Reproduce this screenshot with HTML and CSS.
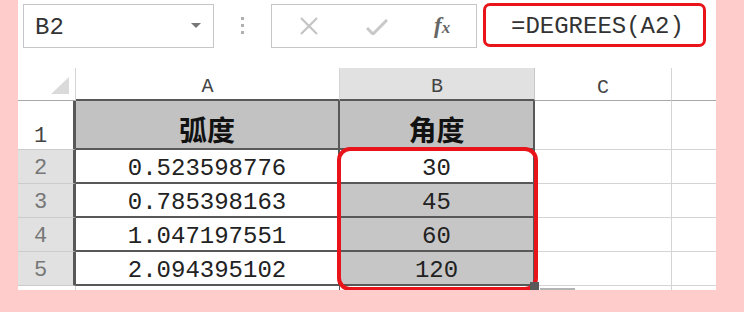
FILE: index.html
```html
<!DOCTYPE html>
<html lang="zh-CN">
<head>
<meta charset="UTF-8">
<title>DEGREES</title>
<link rel="stylesheet" href="styles.css">
</head>
<body>
<div class="panel">
  <div class="formula-bar">
    <div class="name-box">
      <span>B2</span>
      <span class="arrow"></span>
    </div>
    <div class="dots"><i></i><i></i><i></i></div>
    <div class="fx-box">
      <svg class="ico" width="20" height="18" viewBox="0 0 20 18"><path d="M2 1 L18 17 M18 1 L2 17" stroke="#c4c4c4" stroke-width="2.2" fill="none"/></svg>
      <svg class="ico" width="22" height="16" viewBox="0 0 22 16"><path d="M1 9 L7 15 L21 1" stroke="#c8c8c8" stroke-width="3" fill="none"/></svg>
      <span class="fx">f<small>x</small></span>
    </div>
    <div class="formula">=DEGREES(A2)</div>
  </div>

  <div class="sheet">
    <div class="grid">
      <div class="corner"><span class="tri"></span></div>
      <div class="colh hd-t">A</div>
      <div class="colh hd-t sel">B</div>
      <div class="colh">C</div>
      <div class="colh last"></div>

      <div class="rowh first">1</div>
      <div class="cell t title">弧度</div>
      <div class="cell t title">角度</div>
      <div class="cell"></div>
      <div class="cell last"></div>

      <div class="rowh sel">2</div>
      <div class="cell t">0.523598776</div>
      <div class="cell t">30</div>
      <div class="cell"></div>
      <div class="cell last"></div>

      <div class="rowh sel">3</div>
      <div class="cell t">0.785398163</div>
      <div class="cell t shade">45</div>
      <div class="cell"></div>
      <div class="cell last"></div>

      <div class="rowh sel">4</div>
      <div class="cell t">1.047197551</div>
      <div class="cell t shade">60</div>
      <div class="cell"></div>
      <div class="cell last"></div>

      <div class="rowh sel">5</div>
      <div class="cell t">2.094395102</div>
      <div class="cell t shade">120</div>
      <div class="cell"></div>
      <div class="cell last"></div>

      <div class="tail"></div>
      <div class="tail dark"></div>
      <div class="tail dark"></div>
      <div class="tail"><span class="scroll"></span></div>
      <div class="tail last"></div>
    </div>
    <div class="mark"></div>
    <div class="handle"></div>
  </div>
</div>
</body>
</html>
```

FILE: styles.css
```css
body {
  margin: 0;
  background: #ffcccc;
  font-family: "Liberation Mono", monospace;
}
.panel {
  margin-left: 18px;
  width: 698px;
  height: 290px;
  background: #fff;
  overflow: hidden;
}

/* formula bar */
.formula-bar {
  display: flex;
  align-items: flex-start;
  height: 68px;
  padding: 4px 0 0 5px;
  box-sizing: border-box;
}
.name-box {
  width: 191px; height: 44px;
  box-sizing: border-box;
  border: 1px solid #c6c6c6;
  display: flex; align-items: center; justify-content: space-between;
  padding: 2px 12px 0 11px;
  font-size: 24px; color: #333;
}
.arrow {
  width: 0; height: 0;
  border-left: 5px solid transparent;
  border-right: 5px solid transparent;
  border-top: 5px solid #777;
  margin-bottom: 4px;
}
.dots {
  display: flex; flex-direction: column; gap: 4px;
  margin: 13px 0 0 27px;
}
.dots i {
  display: block; width: 3px; height: 3px; background: #b0b0b0;
}
.fx-box {
  width: 206px; height: 44px;
  margin-left: 27px;
  box-sizing: border-box;
  border: 1px solid #c6c6c6;
  display: flex; align-items: center;
  padding-left: 27px;
}
.fx-box .ico + .ico { margin-left: 47px; margin-top: 2px; }
.fx {
  margin-left: 46px;
  font-family: "Liberation Serif", serif;
  font-style: italic; font-weight: 700; font-size: 23px; color: #666;
}
.fx small { font-size: 17px; }
.formula {
  width: 223px; height: 44px;
  margin: -1px 0 0 6px;
  box-sizing: border-box;
  border: 3px solid #e8141a;
  border-radius: 7px;
  padding: 3px 0 0 25px;
  font-size: 24px; color: #333;
  line-height: 36px;
}

/* sheet */
.sheet { position: relative; }
.grid {
  display: grid;
  grid-template-columns: 58px 264px 195px 137px 44px;
  grid-template-rows: 33px 49px 34px 34px 34px 34px 4px;
}
.grid > div {
  box-sizing: border-box;
  border-right: 1px solid #d4d4d4;
  border-bottom: 1px solid #d4d4d4;
}
.grid > .last { border-right: none; }
.corner { position: relative; border-bottom-color: #a8a8a8 !important; }
.tri {
  position: absolute; right: 6px; bottom: 6px;
  width: 0; height: 0;
  border-left: 18px solid transparent;
  border-bottom: 17px solid #dadada;
}
.colh {
  display: flex; align-items: center; justify-content: center;
  font-size: 20px; color: #444;
  padding-top: 6px;
  border-bottom-color: #a8a8a8 !important;
}
.colh.hd-t { border-bottom: 2px solid #585858 !important; }
.colh.sel { background: #e1e1e1; border-right-color: #c8c8c8; }
.rowh {
  display: flex; align-items: center; justify-content: center;
  padding-right: 10px;
  font-size: 22px; color: #777;
  border-right: 3px solid #585858 !important;
  border-bottom-color: #cbcbcb !important;
}
.rowh.first { align-items: flex-end; color: #444; padding-bottom: 0; }
.rowh.sel { background: #e1e1e1; padding-top: 3px; }
.cell {
  display: flex; align-items: center; justify-content: center;
  font-size: 24px; color: #222;
  padding-top: 5px;
}
.cell.t {
  border-right: 2px solid #585858;
  border-bottom: 2px solid #585858;
}
.title {
  background: #c2c2c2;
  font-family: "Noto Sans CJK SC", sans-serif;
  font-weight: 700; font-size: 28px; color: #111;
  padding-top: 8px;
}
.shade { background: #c6c6c6; }
.tail { position: relative; border-bottom: none !important; }
.tail.dark { border-right-color: #585858; }
.scroll {
  position: absolute; left: 5px; top: 2px;
  width: 35px; height: 2px; background: #b4b4b4;
}

/* overlays */
.mark {
  position: absolute; left: 319px; top: 79px;
  width: 201px; height: 144px;
  box-sizing: border-box;
  border: 4px solid #e8141a;
  border-radius: 13px;
}
.handle {
  position: absolute; left: 512px; top: 214px;
  width: 9px; height: 9px;
  background: #5a5a5a;
}
```
